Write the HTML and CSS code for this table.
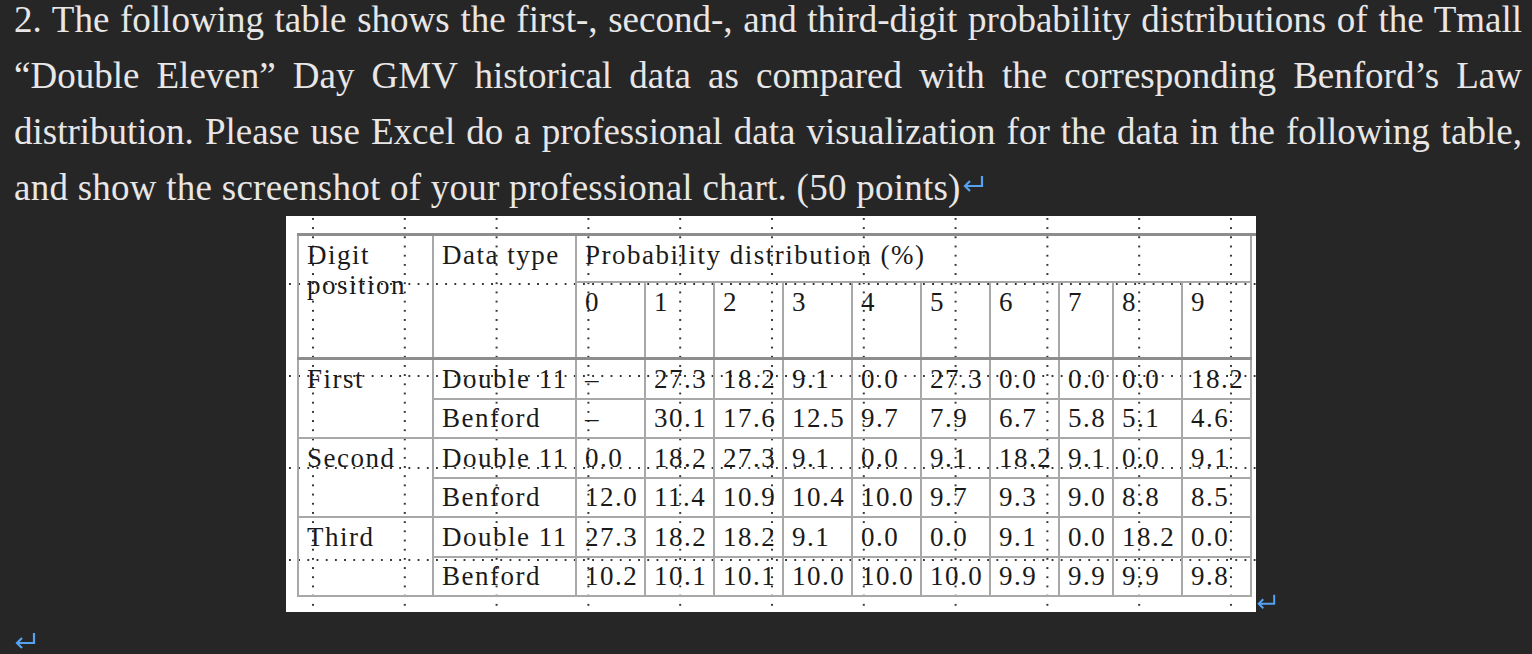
FILE: index.html
```html
<!DOCTYPE html>
<html lang="en">
<head>
<meta charset="utf-8">
<title>Benford table question</title>
<link rel="stylesheet" href="styles.css">
</head>
<body>
<div class="doc">
  <p class="para">
    <span class="line">2. The following table shows the first-, second-, and third-digit probability distributions of the Tmall</span>
    <span class="line">“Double Eleven” Day GMV historical data as compared with the corresponding Benford’s Law</span>
    <span class="line">distribution. Please use Excel do a professional data visualization for the data in the following table,</span>
    <span class="line last">and show the screenshot of your professional chart. (50 points)<svg class="ret" viewBox="0 0 22 17" width="22" height="17"><path d="M20 1V11H3"/><path d="M8 6L3 11L8 16"/></svg></span>
  </p>
  <div class="figline">
    <div class="figure">
      <table class="bt">
        <colgroup>
          <col class="w-pos"><col class="w-type">
          <col class="w-d"><col class="w-d"><col class="w-d"><col class="w-d"><col class="w-d">
          <col class="w-d"><col class="w-d"><col class="w-d7"><col class="w-d"><col class="w-d">
          <col class="w-x">
        </colgroup>
        <tr class="h1">
          <td rowspan="2" class="rs-h">Digit<br>position</td>
          <td rowspan="2" class="rs-h">Data type</td>
          <td colspan="10">Probability distribution (%)</td>
          <td rowspan="8" class="x"></td>
        </tr>
        <tr class="h2">
          <td>0</td><td>1</td><td>2</td><td>3</td><td>4</td><td>5</td><td>6</td><td>7</td><td>8</td><td>9</td>
        </tr>
        <tr class="dbl">
          <td rowspan="2" class="lab">First</td>
          <td>Double 11</td><td>–</td><td>27.3</td><td>18.2</td><td>9.1</td><td>0.0</td><td>27.3</td><td>0.0</td><td>0.0</td><td>0.0</td><td>18.2</td>
        </tr>
        <tr class="ben">
          <td>Benford</td><td>–</td><td>30.1</td><td>17.6</td><td>12.5</td><td>9.7</td><td>7.9</td><td>6.7</td><td>5.8</td><td>5.1</td><td>4.6</td>
        </tr>
        <tr class="dbl">
          <td rowspan="2" class="lab">Second</td>
          <td>Double 11</td><td>0.0</td><td>18.2</td><td>27.3</td><td>9.1</td><td>0.0</td><td>9.1</td><td>18.2</td><td>9.1</td><td>0.0</td><td>9.1</td>
        </tr>
        <tr class="ben">
          <td>Benford</td><td>12.0</td><td>11.4</td><td>10.9</td><td>10.4</td><td>10.0</td><td>9.7</td><td>9.3</td><td>9.0</td><td>8.8</td><td>8.5</td>
        </tr>
        <tr class="dbl">
          <td rowspan="2" class="lab">Third</td>
          <td>Double 11</td><td>27.3</td><td>18.2</td><td>18.2</td><td>9.1</td><td>0.0</td><td>0.0</td><td>9.1</td><td>0.0</td><td>18.2</td><td>0.0</td>
        </tr>
        <tr class="ben">
          <td>Benford</td><td>10.2</td><td>10.1</td><td>10.1</td><td>10.0</td><td>10.0</td><td>10.0</td><td>9.9</td><td>9.9</td><td>9.9</td><td>9.8</td>
        </tr>
      </table>
    </div><svg class="ret" viewBox="0 0 22 17" width="20" height="17"><path d="M20 1V11H3"/><path d="M8 6L3 11L8 16"/></svg>
  </div>
  <div class="empty"><svg class="ret" viewBox="0 0 22 17" width="22" height="17"><path d="M20 1V11H3"/><path d="M8 6L3 11L8 16"/></svg></div>
</div>
</body>
</html>
```

FILE: styles.css
```css
html, body {
  margin: 0;
  background: #262626;
}
body {
  color: #e8e6e6;
  font-family: "Liberation Serif", "Times New Roman", serif;
  overflow: hidden;
}
.doc {
  padding: 0 10px 0 14px;
}
.para {
  margin: -8px 0 0;
  font-size: 37px;
  line-height: 56px;
}
.line {
  display: block;
  text-align: justify;
  text-align-last: justify;
}
.line.last {
  text-align-last: left;
  letter-spacing: 0.25px;
}
.ret {
  fill: none;
  stroke: #55a2f2;
  stroke-width: 2.2;
}
.para .ret {
  vertical-align: 8px;
  margin-left: 1px;
}
.figline {
  display: flex;
  align-items: flex-end;
  padding-left: 272px;
}
.figline .ret {
  margin-bottom: 2px;
  flex: none;
}
.figure {
  flex: none;
  width: 970px;
  height: 396px;
  box-sizing: border-box;
  padding: 17px 0 0 11px;
  overflow: hidden;
  background-color: #ffffff;
  background-image:
    radial-gradient(circle at 1px 1px, #333 0 1px, transparent 1.4px),
    radial-gradient(circle at 1px 1px, #333 0 1px, transparent 1.4px);
  background-size: 91.8px 9.2px, 9.2px 92px;
  background-position: 26px 2px, 3px 67px;
}
.empty {
  padding-top: 20px;
}
.empty .ret {
  display: block;
}

/* table image */
.bt {
  border-collapse: collapse;
  table-layout: fixed;
  width: 973px;
  font-family: "Liberation Serif", "Times New Roman", serif;
  font-size: 27px;
  letter-spacing: 1.5px;
  line-height: 30px;
  color: #1a1a1a;
}
.w-pos { width: 135px; }
.w-type { width: 143px; }
.w-d { width: 69px; }
.w-d7 { width: 54px; }
.w-x { width: 20px; }
.bt td {
  border: 2px solid #a8a8a8;
  padding: 0 0 0 8px;
  vertical-align: middle;
  white-space: nowrap;
  overflow: hidden;
}
.bt tr.h1 { height: 47px; }
.bt tr.h2 { height: 77px; }
.bt tr.dbl { height: 40px; }
.bt tr.ben { height: 39px; }
.bt tr.h1 td,
.bt tr.h2 td {
  vertical-align: top;
  padding-top: 4px;
}
.bt tr.h1 td {
  border-top: 3px solid #8d8d8d;
}
.bt tr.h2 td,
.bt td.rs-h {
  border-bottom: 3px solid #8d8d8d;
}
.bt td.lab {
  vertical-align: top;
  padding-top: 4px;
}
.bt td.x {
  border-right: none;
  border-bottom: none;
  padding: 0;
}
```
